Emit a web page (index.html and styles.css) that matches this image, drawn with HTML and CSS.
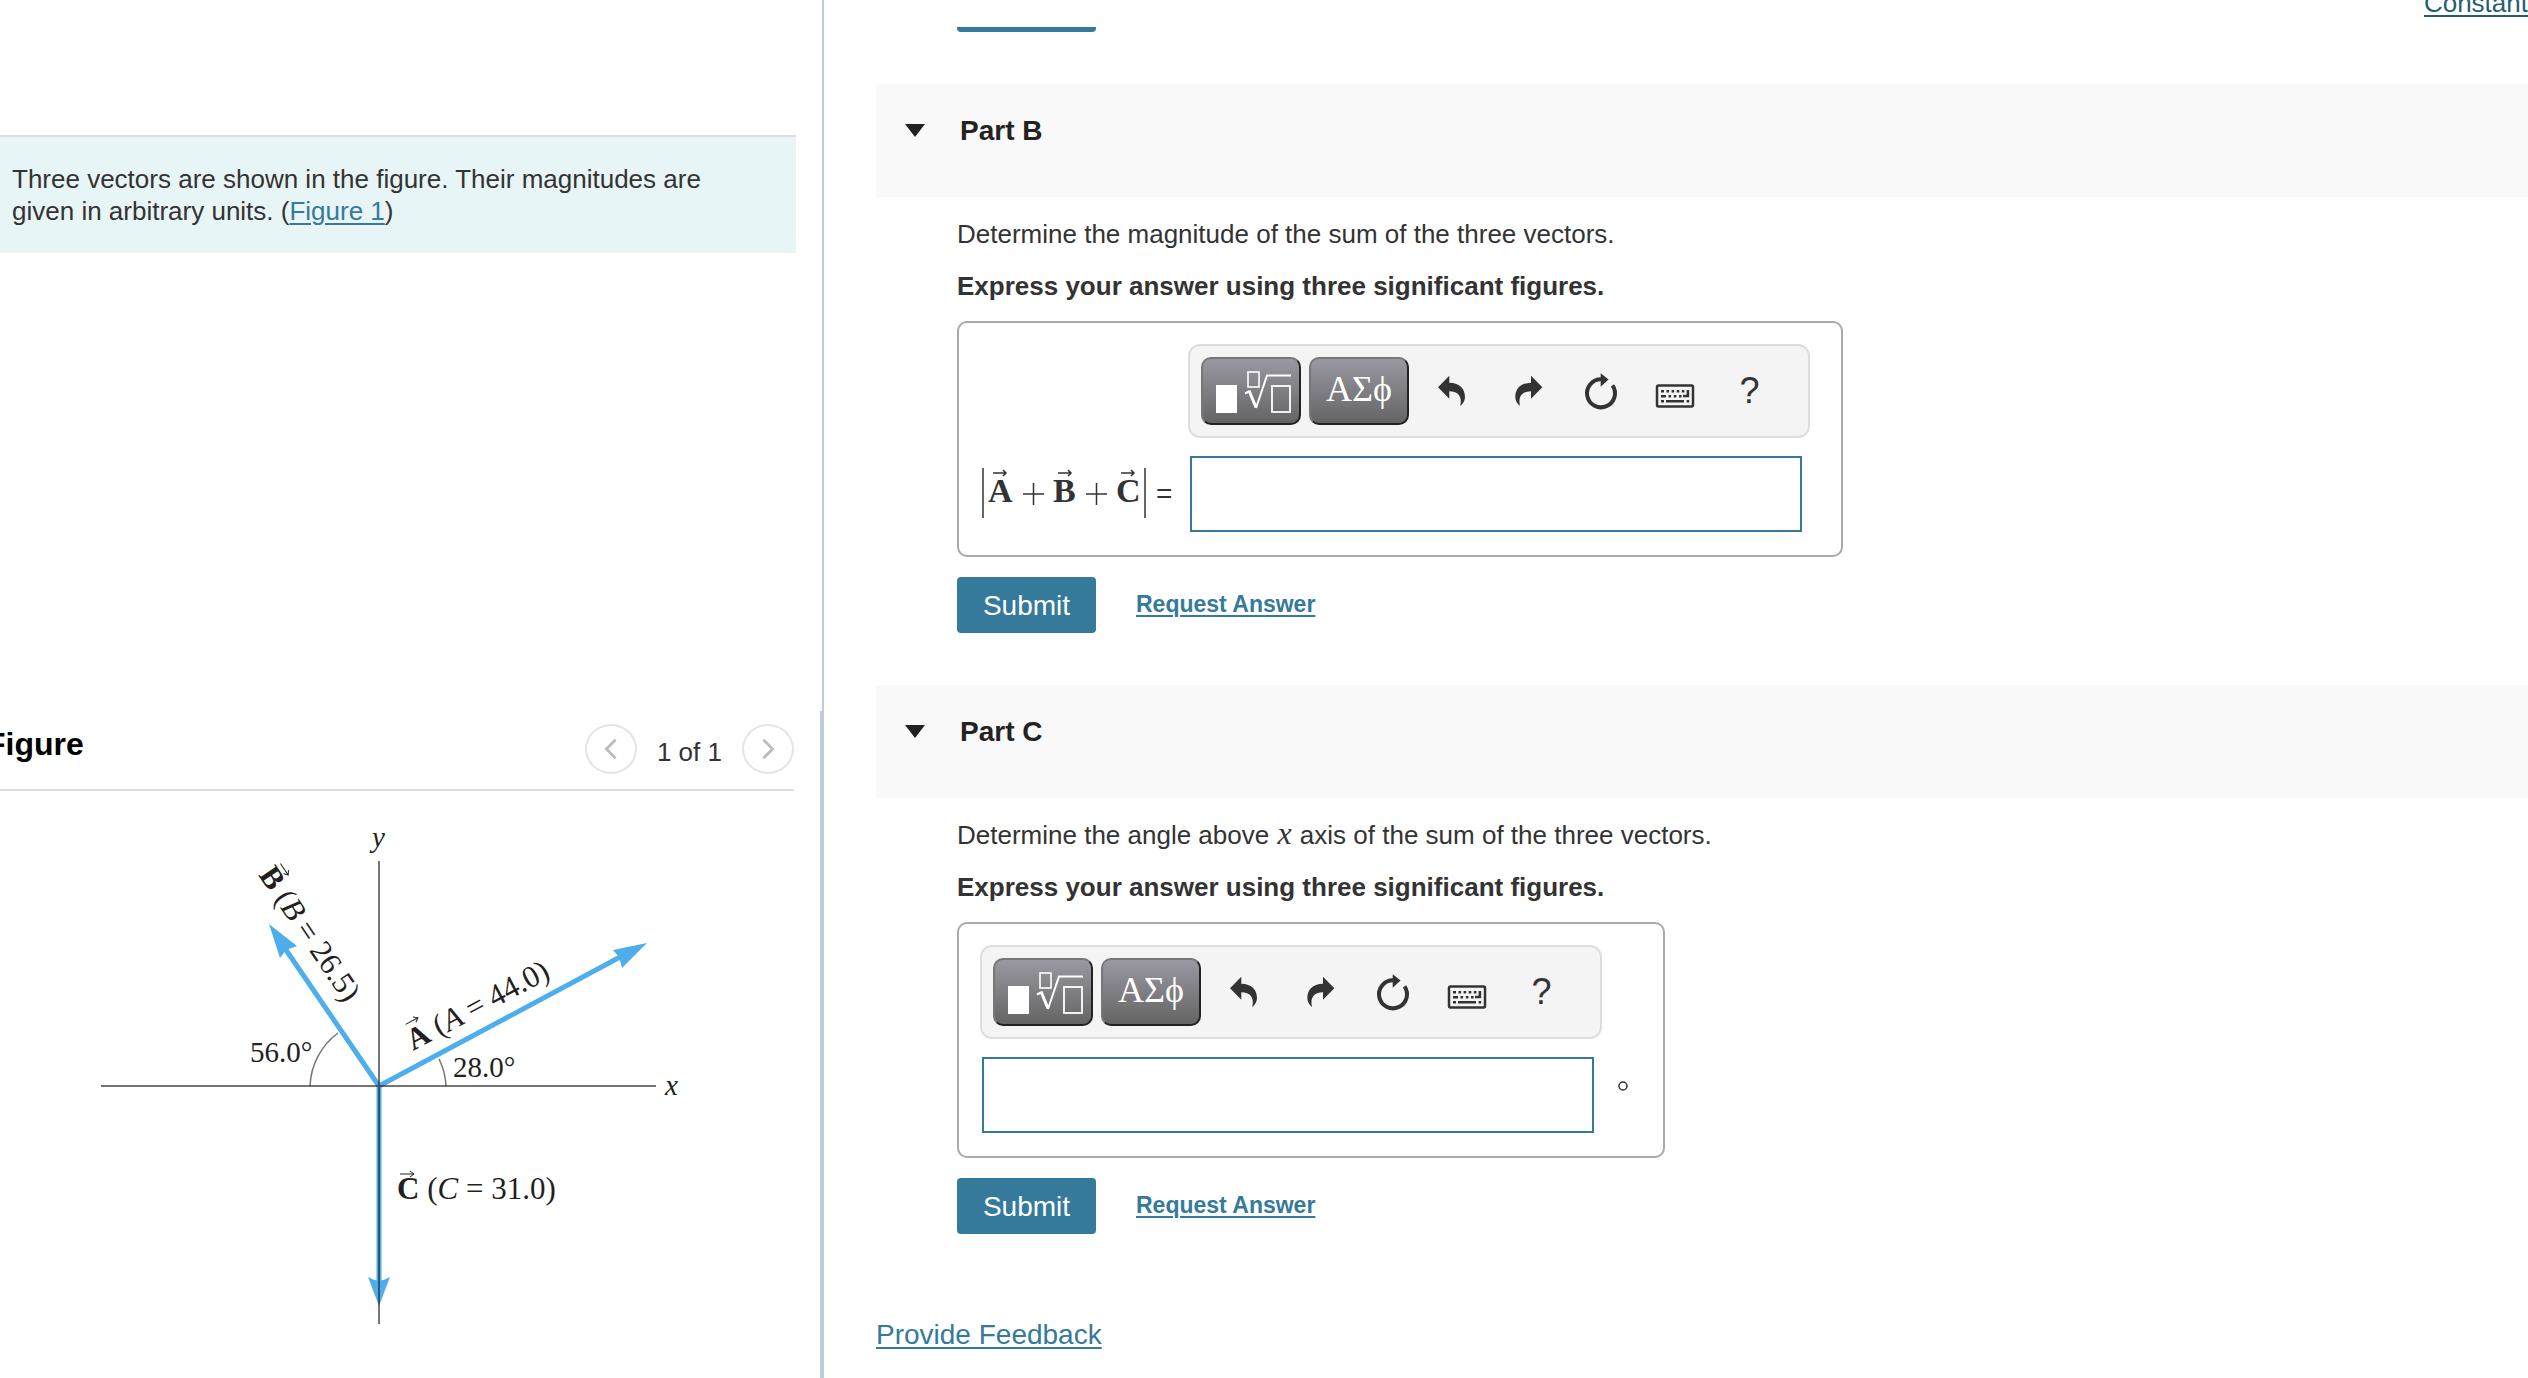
FILE: index.html
```html
<!DOCTYPE html>
<html lang="en">
<head>
<meta charset="utf-8">
<meta name="viewport" content="width=device-width, initial-scale=1">
<title>Vector sum</title>
<link rel="stylesheet" href="styles.css">
</head>
<body>
<svg class="sprite" aria-hidden="true">
  <symbol id="i-template" viewBox="0 0 100 68">
    <rect x="15" y="26" width="21" height="28" fill="#fff"/>
    <g fill="none" stroke="#fff" stroke-width="2">
      <rect x="47" y="13" width="11" height="15" stroke-width="1.6"/>
      <rect x="71" y="27" width="18" height="26" stroke-width="1.8"/>
      <path d="M44 34.500l4-2"/><path d="M48 31.500l7 17" stroke-width="3"/><path d="M55 49L66 16.500H90"/>
    </g>
  </symbol>
  <symbol id="i-undo" viewBox="0 0 75 68">
    <path d="M24 30.300L35.300 18.700V25.700C46 26 51 32 51 40C51 43.500 49 47 46.300 49C48.500 39 44 34.500 35.300 34.300V41.700Z"/>
  </symbol>
  <symbol id="i-redo" viewBox="0 0 75 68">
    <path d="M53.300 30.300L42 18.700V25.700C31.300 26 26.300 32 26.300 40C26.300 43.500 28.300 47 31 49C28.800 39 33.300 34.500 42 34.300V41.700Z"/>
  </symbol>
  <symbol id="i-reset" viewBox="0 0 75 68">
    <path d="M37 22.300A14 14 0 1 0 48.500 28.300" fill="none" stroke="#333" stroke-width="4"/>
    <path d="M36.700 16.300L44.600 22.500L36.700 29.700Z"/>
  </symbol>
  <symbol id="i-keyboard" viewBox="0 0 75 68">
    <rect x="18" y="28.500" width="36" height="21" rx="1.500" fill="none" stroke="#333" stroke-width="2.500"/>
    <path d="M22 33h3v2.500h-3zM27.500 33h2.600v2.500h-2.600zM32.600 33h2.600v2.500h-2.600zM37.700 33h2.600v2.500h-2.600zM42.800 33h2.600v2.500h-2.600zM47.600 33h2.600v7.300h-6.200v-2.500h3.600zM22 38h5v2.500h-5zM29.500 38h2.600v2.500h-2.600zM34.800 38h2.600v2.500h-2.600zM40 38h2.600v2.500h-2.600zM22 43h3v2.500h-3zM27 43h18v2.500h-18zM47.600 43h2.600v2.500h-2.600z"/>
  </symbol>
</svg>

<div class="page">
  <aside class="side">
    <section class="intro-pane">
      <p class="intro">Three vectors are shown in the figure. Their magnitudes are given in arbitrary units. (<a href="#figure">Figure 1</a>)</p>
    </section>
    <section class="figure-pane" id="figure">
      <header class="figure-head">
        <h2>Figure</h2>
        <nav class="pager" aria-label="Figures">
          <button type="button" class="round" aria-label="Previous figure"><svg viewBox="0 0 52 50"><path d="M31 15L21 25L31 35"/></svg></button>
          <span>1 of 1</span>
          <button type="button" class="round" aria-label="Next figure"><svg viewBox="0 0 52 50"><path d="M21 15L31 25L21 35"/></svg></button>
        </nav>
      </header>
      <svg class="diagram" viewBox="0 0 600 500" role="img" aria-label="Vectors A, B and C drawn from the origin">
        <g stroke="#4eaeec" stroke-width="5" fill="none">
          <path d="M279 266L184 127"/><path d="M279 266L522 136"/><path d="M279 266V466"/>
        </g>
        <g fill="#4eaeec">
          <path d="M169 104L197 126L186 130L180 138Z"/>
          <path d="M547 123L513 130L519 137L522 148Z"/>
          <path d="M279 486L268 457Q279 464 290 457Z"/>
        </g>
        <g stroke="#231f20" stroke-opacity=".62" stroke-width="2" fill="none">
          <path d="M1 266H556M279 41V504"/>
          <path d="M210 266A69 69 0 0 1 238 213M346 266A67 67 0 0 0 339 239" stroke-width="1.500"/>
        </g>
        <g class="diagram-text">
          <text x="272" y="27" class="it">y</text>
          <text x="565" y="275" class="it">x</text>
          <text x="150" y="242">56.0°</text>
          <text x="353" y="257">28.0°</text>
          <g class="vector-name" transform="translate(297 379)">
            <text><tspan class="bd">C</tspan> (<tspan class="it">C</tspan> = 31.0)</text>
            <path d="M3 -25H17M13 -28L17 -25L13 -22"/>
          </g>
          <g class="vector-name" transform="translate(313 231) rotate(-28)">
            <text><tspan class="bd">A</tspan> (<tspan class="it">A</tspan> = 44.0)</text>
            <path d="M6 -27H20M16 -30L20 -27L16 -24"/>
          </g>
          <g class="vector-name" transform="translate(158 55) rotate(56)">
            <text><tspan class="bd">B</tspan> (<tspan class="it">B</tspan> = 26.5)</text>
            <path d="M3 -25H17M13 -28L17 -25L13 -22"/>
          </g>
        </g>
      </svg>
    </section>
  </aside>

  <main class="main">
    <div class="topbar"><a href="#constants">Constant</a></div>
    <div class="submit-edge"></div>

    <section class="part">
      <header class="part-head"><button type="button" class="toggle" aria-label="Collapse Part B"><svg viewBox="0 0 22 13"><path d="M1 0H21L11 13Z"/></svg></button><h2>Part B</h2></header>
      <div class="part-body">
        <p>Determine the magnitude of the sum of the three vectors.</p>
        <p class="strong">Express your answer using three significant figures.</p>
        <div class="answer answer-labelled">
          <label class="lhs" for="answer-b">
            <svg viewBox="0 0 168 50" aria-hidden="true">
              <path d="M3 0V50M165 0V50" class="thin"/>
              <g class="bold-math"><text x="8" y="34">A</text><text x="73" y="34">B</text><text x="136" y="34">C</text></g>
              <path d="M43 26H64M53.500 15V37M106 26H127M116.500 15V37" class="thin"/>
              <path d="M13 5H26M23 2L26 5L23 8M78 5H91M88 2L91 5L88 8M141 5H154M151 2L154 5L151 8" class="thin"/>
            </svg>
            <span>=</span>
          </label>
          <div class="entry">
            <div class="toolbar">
              <button type="button" class="key" aria-label="Templates"><svg><use href="#i-template"/></svg></button>
              <button type="button" class="key">ΑΣϕ</button>
              <div class="tools">
                <button type="button" aria-label="Undo"><svg><use href="#i-undo"/></svg></button>
                <button type="button" aria-label="Redo"><svg><use href="#i-redo"/></svg></button>
                <button type="button" aria-label="Reset"><svg><use href="#i-reset"/></svg></button>
                <button type="button" aria-label="Keyboard shortcuts"><svg><use href="#i-keyboard"/></svg></button>
                <button type="button" class="help">?</button>
              </div>
            </div>
            <input type="text" id="answer-b">
          </div>
        </div>
        <div class="actions"><button type="submit" class="submit">Submit</button><a href="#answer-b">Request Answer</a></div>
      </div>
    </section>

    <section class="part">
      <header class="part-head"><button type="button" class="toggle" aria-label="Collapse Part C"><svg viewBox="0 0 22 13"><path d="M1 0H21L11 13Z"/></svg></button><h2>Part C</h2></header>
      <div class="part-body">
        <p>Determine the angle above <var>x</var> axis of the sum of the three vectors.</p>
        <p class="strong">Express your answer using three significant figures.</p>
        <div class="answer">
          <div class="entry">
            <div class="toolbar">
              <button type="button" class="key" aria-label="Templates"><svg><use href="#i-template"/></svg></button>
              <button type="button" class="key">ΑΣϕ</button>
              <div class="tools">
                <button type="button" aria-label="Undo"><svg><use href="#i-undo"/></svg></button>
                <button type="button" aria-label="Redo"><svg><use href="#i-redo"/></svg></button>
                <button type="button" aria-label="Reset"><svg><use href="#i-reset"/></svg></button>
                <button type="button" aria-label="Keyboard shortcuts"><svg><use href="#i-keyboard"/></svg></button>
                <button type="button" class="help">?</button>
              </div>
            </div>
            <input type="text" id="answer-c">
          </div>
          <label class="unit" for="answer-c" aria-label="degrees"><svg viewBox="0 0 12 12"><circle cx="6" cy="6" r="4"/></svg></label>
        </div>
        <div class="actions"><button type="submit" class="submit">Submit</button><a href="#answer-c">Request Answer</a></div>
      </div>
    </section>

    <a class="feedback" href="#feedback">Provide Feedback</a>
  </main>
</div>
</body>
</html>
```
FILE: styles.css
```css
* { box-sizing: border-box; }

body {
  margin: 0;
  background: #fff;
  color: #333;
  font: 26px/32px "Liberation Sans", Arial, sans-serif;
  overflow: hidden;
}

h2, p { margin: 0; }
a { color: #357a9b; text-decoration-thickness: 2px; text-underline-offset: 3px; }
button { border: 0; padding: 0; background: none; color: inherit; font: inherit; }
svg { display: block; }
.sprite { position: absolute; width: 0; height: 0; }

.page {
  display: grid;
  grid-template-columns: minmax(0, 824fr) minmax(0, 1704fr);
  min-height: 100vh;
}

/* Left column */
.side { display: flex; flex-direction: column; margin-left: -14px; }

.intro-pane {
  min-height: 711px;
  padding: 135px 26px 0 0;
  border-right: 2px solid #c0cadf;
}
.intro {
  padding: 26px 80px 26px 26px;
  border-top: 2px solid #ddd;
  background: #e8f5f6;
}

.figure-pane {
  flex: 1;
  padding: 13px 26px 0 0;
  border-right: 4px solid #c0cadf;
}
.figure-head {
  display: flex;
  align-items: flex-start;
  justify-content: space-between;
  height: 67px;
  border-bottom: 2px solid #ddd;
}
.figure-head h2 { color: #000; font-size: 32px; line-height: 40px; }
.pager { display: flex; gap: 20px; }
.pager span { padding-top: 12px; }
.round { width: 52px; height: 50px; border: 2px solid #e4e4e4; border-radius: 50%; }
.round svg { width: 48px; height: 46px; fill: none; stroke: #bbb; stroke-width: 3; }

.diagram { width: 600px; height: 500px; margin: 29px 0 0 114px; overflow: visible; }
.diagram-text { fill: #231f20; font: 29px "Liberation Serif", "Times New Roman", serif; }
.vector-name { font-size: 31px; }
.diagram-text path { fill: none; stroke: #231f20; stroke-width: 1; }
.it { font-style: italic; }
.bd { font-weight: bold; }

/* Right column */
.main { padding-left: 52px; }
.topbar { height: 40px; margin-top: -13px; text-align: right; }
.topbar a { color: #265d73; }
.submit-edge { width: 139px; height: 5px; margin-left: 81px; border-radius: 0 0 4px 4px; background: #357a9b; }

.part { margin-top: 52px; }
.part-head {
  display: flex;
  gap: 34px;
  padding: 31px 28px 50px;
  background: #f9f9f9;
  color: #222;
}
.part-head h2 { font-size: 28px; line-height: 32px; }
.toggle { width: 22px; height: 30px; }
.toggle svg { width: 22px; height: 13px; fill: #222; }

.part-body { display: flex; flex-direction: column; align-items: flex-start; gap: 20px; padding: 21px 28px 0 81px; }
.strong { font-weight: bold; }
var { padding: 0 1px; font: italic 32px/24px "Liberation Serif", "Times New Roman", serif; }

.answer {
  display: flex;
  align-items: flex-end;
  margin-top: -1px;
  padding: 21px 0 23px 21px;
  border: 2px solid #aaa;
  border-radius: 10px;
}
.answer-labelled { padding-right: 31px; }
.lhs { display: flex; align-items: center; gap: 8px; width: 208px; height: 76px; }
.lhs span { font-size: 28px; }
.lhs svg { width: 168px; height: 50px; margin-bottom: 2px; }
.thin { fill: none; stroke: #333; stroke-width: 1.5; }
.bold-math { fill: #333; font: bold 34px "Liberation Serif", "Times New Roman", serif; }

.entry { display: flex; flex-direction: column; gap: 18px; }
.toolbar {
  display: flex;
  gap: 8px;
  width: 622px;
  padding: 11px;
  border: 2px solid #ddd;
  border-radius: 12px;
  background: #f4f4f4;
}
.key {
  width: 100px;
  height: 68px;
  padding-bottom: 4px;
  border: 2px solid;
  border-color: #777 #222 #222 #777;
  border-radius: 10px;
  background: linear-gradient(#9a98a2, #646464);
  color: #fff;
  font: 36px "Liberation Serif", "Times New Roman", serif;
}
.key svg { width: 100px; height: 68px; margin: 0 -2px -4px; }
.tools { display: flex; margin-left: -3px; }
.tools button { width: 75px; height: 68px; font-size: 36px; }
.tools .help { width: 71px; }
.tools svg { width: 75px; height: 68px; fill: #333; }
.entry input { width: 612px; height: 76px; margin-left: 2px; padding: 0 12px; border: 2px solid #357a9b; border-radius: 0; font: inherit; }

.unit { width: 61px; height: 76px; padding: 23px 0 0 15px; }
.unit svg { width: 12px; height: 12px; fill: none; stroke: #333; stroke-width: 1.5; }

.actions { display: flex; align-items: center; gap: 40px; }
.actions a { padding-bottom: 2px; font-size: 23px; font-weight: bold; }
.submit { width: 139px; height: 56px; padding-top: 2px; border-radius: 4px; background: #357a9b; color: #fff; font-size: 28px; }

.feedback { display: inline-block; margin-top: 85px; font-size: 28px; }
```
